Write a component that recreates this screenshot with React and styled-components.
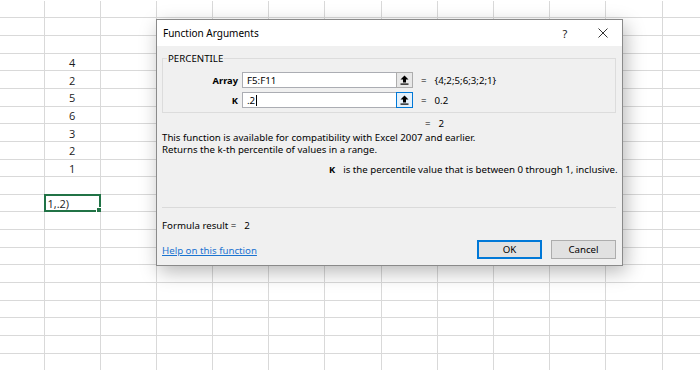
import React from "react";
import styled, { createGlobalStyle } from "styled-components";

const GlobalStyle = createGlobalStyle`
  html, body {
    margin: 0;
    padding: 0;
    background: #ffffff;
  }
`;

const ROWS = 21;
const COLS = 13;

const Page = styled.div`
  position: relative;
  width: 700px;
  height: 370px;
  overflow: hidden;
  background: #ffffff;
`;

const Sheet = styled.div`
  display: grid;
  grid-template-columns: 44.5px repeat(12, 56.2px);
  grid-auto-rows: 17.65px;
  margin-top: 0.8px;
`;

const Cell = styled.div`
  position: relative;
  box-sizing: border-box;
  border-right: 1px solid #d9d9d9;
  border-bottom: 1px solid #d9d9d9;
  display: flex;
  align-items: center;
  justify-content: ${({ $align }) => $align || "center"};
  padding: 1px 2px 0;
  font-family: "Open Sans", "Liberation Sans", sans-serif;
  font-size: 11px;
  color: #1b1b1b;
  ${({ $selected }) =>
    $selected &&
    `
    border: 2px solid #217346;
    margin: -1px 0 0 -1px;
    width: calc(100% + 1px);
    height: calc(100% + 1px);
  `}
`;

const FillHandle = styled.span`
  position: absolute;
  right: -3px;
  bottom: -3px;
  width: 4px;
  height: 4px;
  background: #217346;
  border: 1px solid #ffffff;
`;

const Dialog = styled.div`
  position: absolute;
  left: 156px;
  top: 19px;
  width: 467px;
  height: 247px;
  box-sizing: border-box;
  border: 1px solid #8a8a8a;
  background: #f0f0f0;
  box-shadow: 3px 6px 18px rgba(0, 0, 0, 0.28);
  display: flex;
  flex-direction: column;
  font-family: "Noto Sans", "Open Sans", sans-serif;
  font-size: 9.7px;
  color: #000000;
  white-space: nowrap;
`;

const TitleBar = styled.div`
  height: 26px;
  background: #ffffff;
  display: flex;
  align-items: center;
  padding-left: 6px;
  font-size: 10px;
`;

const Title = styled.div`
  flex: 1;
`;

const TitleButton = styled.div`
  width: 38px;
  height: 26px;
  display: flex;
  align-items: center;
  justify-content: center;
  font-size: 11px;
  color: #222;
`;

const Body = styled.div`
  flex: 1;
  display: flex;
  flex-direction: column;
  padding: 0 6px 0 5px;
`;

const GroupBox = styled.fieldset`
  margin: 6px 0 0 0;
  padding: 7px 0 4px 0;
  border: 1px solid #dcdcdc;
  min-width: 0;
`;

const Legend = styled.legend`
  margin-left: 4px;
  padding: 0 1px;
  line-height: 13px;
`;

const ArgGrid = styled.div`
  display: grid;
  grid-template-columns: 79px 154px 17px auto;
  grid-auto-rows: 16px;
  row-gap: 4px;
  align-items: center;
`;

const ArgLabel = styled.div`
  font-weight: 700;
  font-size: 9.3px;
  text-align: right;
  padding-right: 4px;
`;

const ArgInput = styled.div`
  height: 16px;
  box-sizing: border-box;
  border: 1px solid #abadb3;
  border-right: none;
  background: #ffffff;
  display: flex;
  align-items: center;
  padding-left: 4px;
`;

const Caret = styled.span`
  display: inline-block;
  width: 1px;
  height: 11px;
  background: #000;
  margin-left: 1px;
`;

const RefButton = styled.div`
  height: 16px;
  box-sizing: border-box;
  border: 1px solid ${({ $active }) => ($active ? "#0078d7" : "#adadad")};
  background: ${({ $active }) => ($active ? "#e5f1fb" : "#e8e8e8")};
  display: flex;
  align-items: center;
  justify-content: center;
`;

const ArgValue = styled.div`
  display: flex;
  gap: 8px;
  padding-left: 8px;
`;

const ResultRow = styled.div`
  margin-top: 4px;
  padding-left: 263px;
  display: flex;
  gap: 8px;
  line-height: 13px;
`;

const Description = styled.div`
  margin-top: 2px;
  line-height: 11.5px;
`;

const ArgHelp = styled.div`
  margin-top: 9px;
  padding-left: 167px;
  display: flex;
  gap: 8px;
  line-height: 12px;
`;

const Bold = styled.span`
  font-weight: 700;
  font-size: 9.3px;
`;

const Separator = styled.div`
  margin-top: 31px;
  height: 1px;
  background: #dadada;
`;

const FormulaRow = styled.div`
  margin-top: 11px;
  display: flex;
  gap: 8px;
  line-height: 13px;
`;

const BottomRow = styled.div`
  margin-top: 8px;
  display: flex;
  align-items: center;
  justify-content: space-between;
`;

const HelpLink = styled.a`
  color: #1a73d0;
  text-decoration: underline;
  cursor: pointer;
  padding-top: 2px;
`;

const Buttons = styled.div`
  display: flex;
  gap: 9px;
`;

const Button = styled.button`
  width: 65px;
  height: 19px;
  box-sizing: border-box;
  border: 1px solid ${({ $primary }) => ($primary ? "#0078d7" : "#adadad")};
  box-shadow: ${({ $primary }) => ($primary ? "inset 0 0 0 1px #0078d7" : "none")};
  background: #e1e1e1;
  font-family: inherit;
  font-size: 9.7px;
  color: #000;
  padding: 0;
`;

const UpArrow = () => (
  <svg width="9" height="10" viewBox="0 0 9 10">
    <path d="M4.5 0.5 L8.5 4.5 H6 V7.5 H3 V4.5 H0.5 Z" fill="#000" />
    <rect x="0.5" y="8.5" width="8" height="1.2" fill="#000" />
  </svg>
);

const CloseIcon = () => (
  <svg width="10" height="10" viewBox="0 0 10 10">
    <path d="M0.5 0.5 L9.5 9.5 M9.5 0.5 L0.5 9.5" stroke="#333" strokeWidth="1" />
  </svg>
);

const values = { 3: "4", 4: "2", 5: "5", 6: "6", 7: "3", 8: "2", 9: "1" };

const App = () => {
  const cells = [];
  for (let r = 0; r < ROWS; r++) {
    for (let c = 0; c < COLS; c++) {
      if (c === 1 && r === 11) {
        cells.push(
          <Cell key={`${r}-${c}`} $selected $align="flex-start">
            1,.2)
            <FillHandle />
          </Cell>
        );
      } else {
        cells.push(<Cell key={`${r}-${c}`}>{c === 1 ? values[r] : null}</Cell>);
      }
    }
  }

  return (
    <>
      <GlobalStyle />
      <Page>
        <Sheet>{cells}</Sheet>
        <Dialog>
          <TitleBar>
            <Title>Function Arguments</Title>
            <TitleButton>?</TitleButton>
            <TitleButton>
              <CloseIcon />
            </TitleButton>
          </TitleBar>
          <Body>
            <GroupBox>
              <Legend>PERCENTILE</Legend>
              <ArgGrid>
                <ArgLabel>Array</ArgLabel>
                <ArgInput>F5:F11</ArgInput>
                <RefButton>
                  <UpArrow />
                </RefButton>
                <ArgValue>
                  <span>=</span>
                  <span>{"{4;2;5;6;3;2;1}"}</span>
                </ArgValue>
                <ArgLabel>K</ArgLabel>
                <ArgInput>
                  .2
                  <Caret />
                </ArgInput>
                <RefButton $active>
                  <UpArrow />
                </RefButton>
                <ArgValue>
                  <span>=</span>
                  <span>0.2</span>
                </ArgValue>
              </ArgGrid>
            </GroupBox>
            <ResultRow>
              <span>=</span>
              <span>2</span>
            </ResultRow>
            <Description>
              This function is available for compatibility with Excel 2007 and earlier.
              <br />
              Returns the k-th percentile of values in a range.
            </Description>
            <ArgHelp>
              <Bold>K</Bold>
              <span>is the percentile value that is between 0 through 1, inclusive.</span>
            </ArgHelp>
            <Separator />
            <FormulaRow>
              <span>Formula result =</span>
              <span>2</span>
            </FormulaRow>
            <BottomRow>
              <HelpLink>Help on this function</HelpLink>
              <Buttons>
                <Button $primary>OK</Button>
                <Button>Cancel</Button>
              </Buttons>
            </BottomRow>
          </Body>
        </Dialog>
      </Page>
    </>
  );
};

export default App;
